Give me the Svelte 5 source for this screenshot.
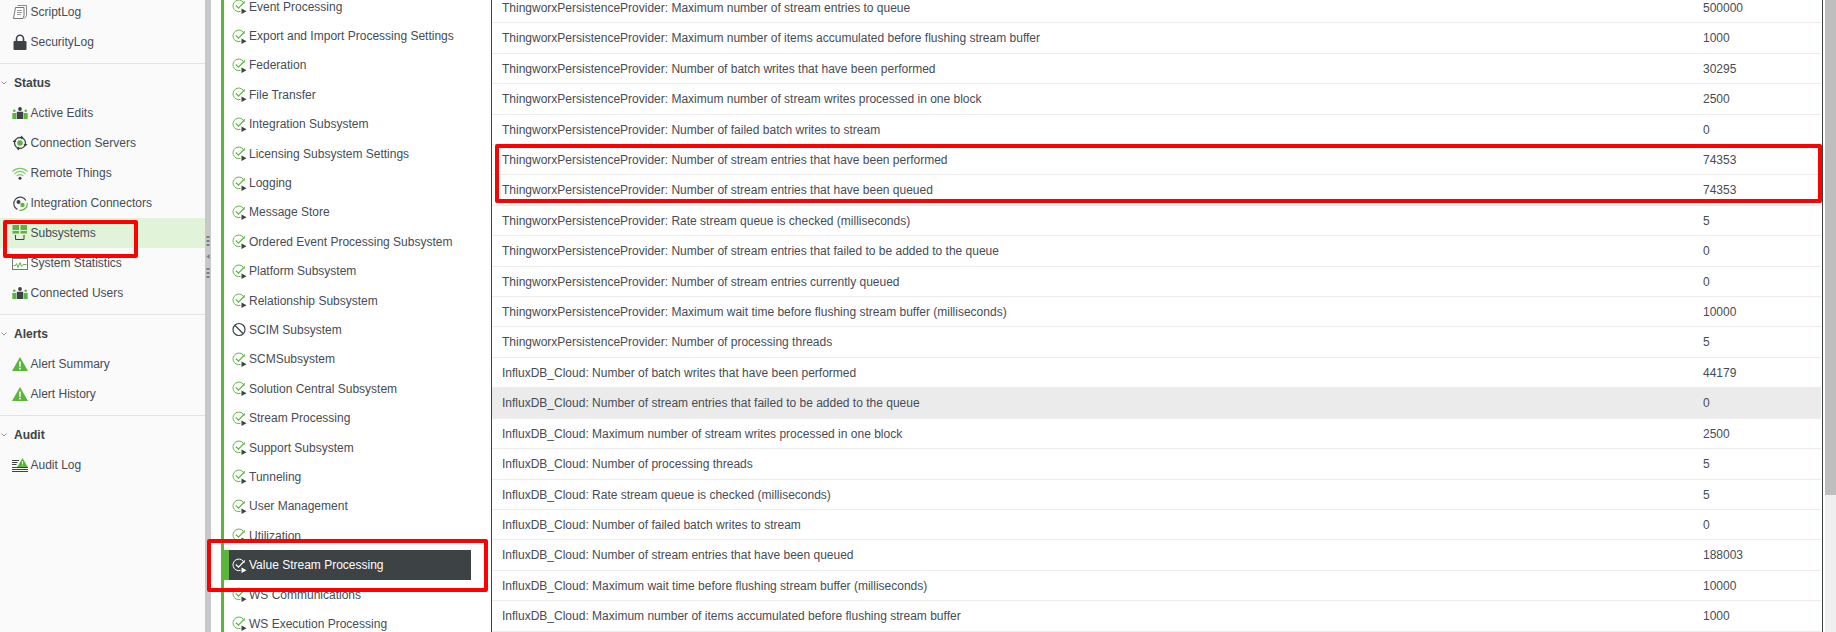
<script>
  const tp = 'ThingworxPersistenceProvider: ';
  const ix = 'InfluxDB_Cloud: ';
  const rows = [
    [tp + 'Maximum number of stream entries to queue', '500000'],
    [tp + 'Maximum number of items accumulated before flushing stream buffer', '1000'],
    [tp + 'Number of batch writes that have been performed', '30295'],
    [tp + 'Maximum number of stream writes processed in one block', '2500'],
    [tp + 'Number of failed batch writes to stream', '0'],
    [tp + 'Number of stream entries that have been performed', '74353'],
    [tp + 'Number of stream entries that have been queued', '74353'],
    [tp + 'Rate stream queue is checked (milliseconds)', '5'],
    [tp + 'Number of stream entries that failed to be added to the queue', '0'],
    [tp + 'Number of stream entries currently queued', '0'],
    [tp + 'Maximum wait time before flushing stream buffer (milliseconds)', '10000'],
    [tp + 'Number of processing threads', '5'],
    [ix + 'Number of batch writes that have been performed', '44179'],
    [ix + 'Number of stream entries that failed to be added to the queue', '0'],
    [ix + 'Maximum number of stream writes processed in one block', '2500'],
    [ix + 'Number of processing threads', '5'],
    [ix + 'Rate stream queue is checked (milliseconds)', '5'],
    [ix + 'Number of failed batch writes to stream', '0'],
    [ix + 'Number of stream entries that have been queued', '188003'],
    [ix + 'Maximum wait time before flushing stream buffer (milliseconds)', '10000'],
    [ix + 'Maximum number of items accumulated before flushing stream buffer', '1000']
  ];

  const subsystems = [
    'Event Processing', 'Export and Import Processing Settings', 'Federation', 'File Transfer',
    'Integration Subsystem', 'Licensing Subsystem Settings', 'Logging', 'Message Store',
    'Ordered Event Processing Subsystem', 'Platform Subsystem', 'Relationship Subsystem',
    'SCIM Subsystem', 'SCMSubsystem', 'Solution Central Subsystem', 'Stream Processing',
    'Support Subsystem', 'Tunneling', 'User Management', 'Utilization',
    'Value Stream Processing', 'WS Communications', 'WS Execution Processing'
  ];

  const groups = [
    { items: [['ScriptLog', 'script'], ['SecurityLog', 'lock']] },
    { title: 'Status', items: [
      ['Active Edits', 'users'], ['Connection Servers', 'conn'], ['Remote Things', 'wifi'],
      ['Integration Connectors', 'integ'], ['Subsystems', 'subs'], ['System Statistics', 'stats'],
      ['Connected Users', 'users']
    ] },
    { title: 'Alerts', items: [['Alert Summary', 'alert'], ['Alert History', 'alert']] },
    { title: 'Audit', items: [['Audit Log', 'audit']] }
  ];
</script>

{#snippet navIcon(kind)}
  <svg class="nav-icon" viewBox="0 0 16 16" width="16" height="16">
    {#if kind === 'script'}
      <path d="M5.500 1.500h9v10l-2 3" fill="none" stroke="#8a8a8a" />
      <path d="M3.500 3.500h8.500v8l-1 3h-9.500z" fill="#fff" stroke="#777" />
      <path d="M5 6.500h5M5 8.500h5M5 10.500h4" stroke="#999" />
    {:else if kind === 'lock'}
      <path d="M4.500 8V4.800a3.500 3.500 0 0 1 7 0V8" fill="none" stroke="#3d4345" stroke-width="1.600" />
      <rect x="1.500" y="7" width="13" height="9" rx="1" fill="#3d4345" />
    {:else if kind === 'users'}
      <circle cx="2.300" cy="5.800" r="1.300" fill="#5bb53c" />
      <path d="M.300 8h4v6h-4z" fill="#5bb53c" />
      <circle cx="13.700" cy="5.800" r="1.300" fill="#5bb53c" />
      <path d="M11.700 8h4v6h-4z" fill="#5bb53c" />
      <circle cx="8" cy="4" r="1.900" fill="#3d4345" />
      <path d="M4.800 6.800h6.400v7.200h-6.400z" fill="#3d4345" />
    {:else if kind === 'conn'}
      <circle cx="8" cy="8" r="5.500" fill="none" stroke="#3d4345" stroke-width="1.300" />
      <circle cx="8" cy="8" r="2.800" fill="#5bb53c" />
      <path d="M9 .500l2.500 2-2.500 2zM7 15.500l-2.500-2 2.500-2zM.500 7l2-2.500 2 2.500zM15.500 9l-2 2.500-2-2.500z" fill="#3d4345" />
    {:else if kind === 'wifi'}
      <path d="M.500 6.500a10.500 10.500 0 0 1 15 0M2.500 8.800a7.500 7.500 0 0 1 11 0M4.800 11a4.500 4.500 0 0 1 6.400 0" fill="none" stroke="#7cc765" stroke-width="1.100" />
      <circle cx="8" cy="13.200" r="1.500" fill="#3d4345" />
    {:else if kind === 'integ'}
      <path d="M5.500 14.500A6.500 6.500 0 1 1 14 5.500" fill="none" stroke="#3d4345" stroke-width="1.200" />
      <path d="M15.300 8a6.800 6.800 0 0 1-7.800 7.300" fill="none" stroke="#5bb53c" stroke-width="1.200" />
      <circle cx="6.500" cy="7" r="2" fill="#3d4345" />
      <circle cx="10.500" cy="10" r="2.200" fill="#5bb53c" />
    {:else if kind === 'subs'}
      <path d="M.500 0h6.500v5h-6.500zM8.500 0h6.500v5h-6.500z" fill="#5bb53c" />
      <path d="M.500 6h6.500v2.500h-6.500zM8.500 6h6.500v2.500h-6.500z" fill="#5bb53c" />
      <path d="M3.500 10v4.500h8.500v-4.500" fill="none" stroke="#3d4345" />
    {:else if kind === 'stats'}
      <rect x=".500" y="3.500" width="15" height="11" fill="#fff" stroke="#777" />
      <path d="M1.500 10.500h2l1-2 1.500 4 2-5 1.500 4 1.500-2h3.500" fill="none" stroke="#5bb53c" />
    {:else if kind === 'alert'}
      <path d="M8 1l8 14h-16z" fill="#5bb53c" />
      <path d="M7.200 5.500h1.600l-.2 5.500h-1.200z" fill="#fff" />
      <rect x="7.200" y="11.800" width="1.600" height="1.600" fill="#fff" />
    {:else if kind === 'audit'}
      <path d="M10.500 1l5.300 9h-10.600z" fill="#5bb53c" />
      <path d="M10.100 4h.8v3h-.8zM10.100 7.800h.8v.9h-.8z" fill="#fff" />
      <path d="M0 3.500h7M0 5.500h5.500M0 7.500h4.500M0 10.500h16M0 12.500h16M0 14.500h16" stroke="#3d4345" />
    {/if}
  </svg>
{/snippet}

{#snippet statusIcon(blocked, selected)}
  <svg class="status-icon" viewBox="0 0 15 15" width="15" height="15">
    {#if blocked}
      <circle cx="7" cy="7.500" r="6" fill="none" stroke="#3d4345" stroke-width="1.200" />
      <path d="M3 3.500l8 8" stroke="#3d4345" stroke-width="1.200" />
    {:else}
      <path d="M8.500 12.400A5.800 5.800 0 1 1 12.300 5" fill="none" stroke={selected ? '#fff' : '#62b846'} />
      <path d="M3.800 6.500l2.700 2.700 6.300-6.700" fill="none" stroke={selected ? '#fff' : '#62b846'} stroke-width="1.200" />
      <path d="M9.500 9.500l5 2.700-5 2.700z" fill={selected ? '#fff' : '#3d4345'} />
    {/if}
  </svg>
{/snippet}

<div class="page">
  <nav class="nav">
    {#each groups as group, g}
      <section class="group" class:first={g === 0}>
        {#if group.title}
          <h3>
            <svg class="chev" viewBox="0 0 6 4" width="6" height="4"><path d="M.5.500l2.500 2.500 2.500-2.500" fill="none" stroke="#777" stroke-width=".8" /></svg>
            {group.title}
          </h3>
        {/if}
        {#each group.items as [label, icon]}
          <div class="nav-item" class:active={label === 'Subsystems'}>
            {@render navIcon(icon)}
            <span>{label}</span>
          </div>
        {/each}
      </section>
    {/each}
  </nav>

  <div class="splitter">
    <svg viewBox="0 0 6 44" width="6" height="44">
      <path d="M1.500 1h3v2h-3zM1.500 5h3v2h-3zM1.500 9h3v2h-3zM1.500 33h3v2h-3zM1.500 37h3v2h-3zM1.500 41h3v2h-3z" fill="#7c7c7c" />
      <path d="M4.500 19v5l-3-2.500z" fill="#7c7c7c" />
    </svg>
  </div>

  <div class="subsystems">
    <ul>
      {#each subsystems as name}
        <li class:selected={name === 'Value Stream Processing'}>
          {@render statusIcon(name === 'SCIM Subsystem', name === 'Value Stream Processing')}
          <span>{name}</span>
        </li>
      {/each}
    </ul>
  </div>

  <div class="details">
    {#each rows as [label, value], i}
      <div class="row" class:hover={i === 13}>
        <span class="label">{label}</span>
        <span class="value">{value}</span>
      </div>
    {/each}
  </div>

  <div class="scrollbar"><div class="track"><div class="thumb"></div></div></div>

  <div class="mark mark-nav"></div>
  <div class="mark mark-sub"></div>
  <div class="mark mark-rows"></div>
</div>

<style>
  :global(body) {
    margin: 0;
    background: #fff;
  }

  .page {
    position: relative;
    display: flex;
    width: 1836px;
    height: 632px;
    overflow: hidden;
    font-family: "Liberation Sans", Arial, sans-serif;
    font-size: 12px;
    color: #464c55;
  }

  .nav {
    flex: 0 0 205px;
    background: #fafafa;
    margin-top: -3px;
  }

  .group {
    border-top: 1px solid #e3e3e3;
    padding: 4px 0 6px;
  }

  .group.first {
    border-top: 0;
    padding-top: 0;
  }

  .group h3 {
    display: flex;
    align-items: center;
    gap: 7px;
    height: 30px;
    margin: 0;
    font-size: 12px;
    font-weight: 700;
    color: #3d4345;
  }

  .chev {
    margin-left: 1px;
    flex: none;
  }

  .nav-item {
    display: flex;
    align-items: center;
    gap: 2.5px;
    height: 30px;
    padding-left: 12px;
  }

  .nav-item.active {
    background: #e1f3d8;
  }

  .nav-icon {
    flex: none;
  }

  .splitter {
    flex: 0 0 6px;
    background: #c8c8c8;
    display: flex;
    justify-content: center;
    padding-top: 235px;
    box-sizing: border-box;
  }

  .splitter svg {
    display: block;
  }

  .subsystems {
    flex: 0 0 267px;
    margin-left: 10px;
    border-left: 3px solid #5bb53c;
    border-right: 1px solid #3d4345;
  }

  .subsystems ul {
    list-style: none;
    margin: -8px 0 0;
    padding: 0;
  }

  .subsystems li {
    display: flex;
    align-items: center;
    gap: 2px;
    height: 29.4px;
    padding-left: 8px;
    margin-right: 20px;
  }

  .subsystems li.selected {
    position: relative;
    margin-left: 5px;
    padding-left: 3px;
    background: #3d4345;
    color: #fff;
    box-shadow: -5px 0 0 #5bb53c;
  }

  .details {
    flex: 1;
    margin-top: -7px;
  }

  .row {
    display: flex;
    align-items: center;
    box-sizing: border-box;
    height: 30.42px;
    padding-top: 0.6px;
    padding-left: 10px;
    border-bottom: 1px solid #ececec;
  }

  .row.hover {
    background: #ebebeb;
  }

  .label {
    flex: 0 0 1201px;
  }

  .scrollbar {
    flex: 0 0 11px;
    margin-left: 1px;
    border-left: 1px solid #3d4345;
    padding-left: 2px;
  }

  .track {
    height: 100%;
    background: #efefef;
  }

  .thumb {
    height: 495px;
    background: #bebebe;
  }

  .mark {
    position: absolute;
    border: 4px solid #f00;
    border-radius: 2px;
    box-sizing: border-box;
  }

  .mark-nav {
    left: 3px;
    top: 220px;
    width: 135px;
    height: 38px;
  }

  .mark-sub {
    left: 207px;
    top: 539px;
    width: 281px;
    height: 53px;
  }

  .mark-rows {
    left: 495px;
    top: 144px;
    width: 1327px;
    height: 59px;
  }
</style>
